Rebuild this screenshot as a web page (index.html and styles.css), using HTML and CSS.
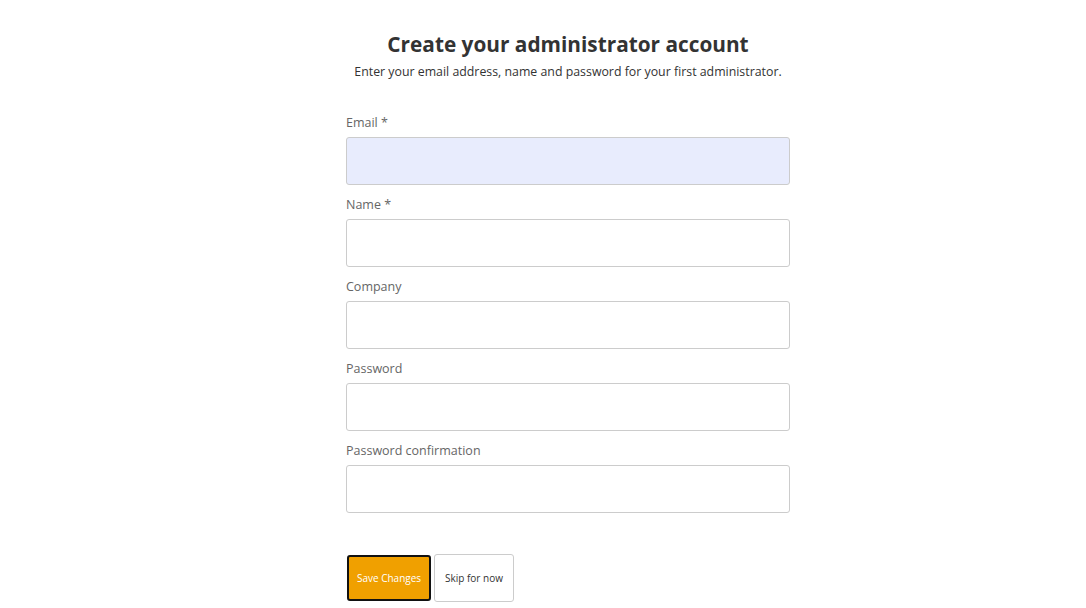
FILE: index.html
```html
<!DOCTYPE html>
<html lang="en">
<head>
<meta charset="utf-8">
<title>Create your administrator account</title>
<link rel="stylesheet" href="styles.css">
</head>
<body>
<div class="page">
  <main class="setup">
    <header class="intro">
      <h1 class="title">Create your administrator account</h1>
      <p class="subtitle">Enter your email address, name and password for your first administrator.</p>
    </header>
    <form class="form">
      <div class="field">
        <label class="label">Email *</label>
        <input class="input input-filled" type="email">
      </div>
      <div class="field">
        <label class="label">Name *</label>
        <input class="input" type="text">
      </div>
      <div class="field">
        <label class="label">Company</label>
        <input class="input" type="text">
      </div>
      <div class="field">
        <label class="label">Password</label>
        <input class="input" type="password">
      </div>
      <div class="field">
        <label class="label">Password confirmation</label>
        <input class="input" type="password">
      </div>
      <div class="actions">
        <button type="button" class="btn btn-primary">Save Changes</button>
        <button type="button" class="btn btn-secondary">Skip for now</button>
      </div>
    </form>
  </main>
</div>
</body>
</html>
```
FILE: styles.css
```css
html, body {
  margin: 0;
  padding: 0;
  background: #ffffff;
  font-family: "Open Sans", "Liberation Sans", sans-serif;
  color: #333333;
}

.page {
  padding-left: 50px;
  padding-top: 29px;
}

.setup {
  width: 444px;
  margin: 0 auto;
}

.intro {
  text-align: center;
  margin-bottom: 28px;
}

.title {
  margin: 0;
  font-size: 20.8px;
  line-height: 30px;
  font-weight: 700;
  color: #333333;
  white-space: nowrap;
}

.subtitle {
  margin: 0 -100px;
  font-size: 12.35px;
  line-height: 26px;
  color: #333333;
  white-space: nowrap;
}

.form {
  display: flex;
  flex-direction: column;
}

.field {
  display: flex;
  flex-direction: column;
  margin-bottom: 10px;
}

.label {
  font-size: 12.5px;
  line-height: 20px;
  color: #666666;
  margin-bottom: 4px;
}

.input {
  box-sizing: border-box;
  height: 48px;
  width: 100%;
  border: 1px solid #cccccc;
  border-radius: 3px;
  background: #ffffff;
  margin: 0;
  font: inherit;
}

.input-filled {
  background: #e8ecfd;
}

.actions {
  display: flex;
  gap: 3px;
  margin-top: 31px;
  align-items: center;
}

.btn {
  box-sizing: border-box;
  font-family: "Open Sans", "Liberation Sans", sans-serif;
  font-size: 10px;
  border-radius: 3px;
  cursor: pointer;
  padding: 0;
}

.btn-primary {
  width: 84px;
  height: 46px;
  margin-left: 1px;
  background: #f0a000;
  color: #ffffff;
  border: 2px solid #111111;
}

.btn-secondary {
  width: 80px;
  height: 48px;
  background: #ffffff;
  color: #333333;
  border: 1px solid #cccccc;
}
```
